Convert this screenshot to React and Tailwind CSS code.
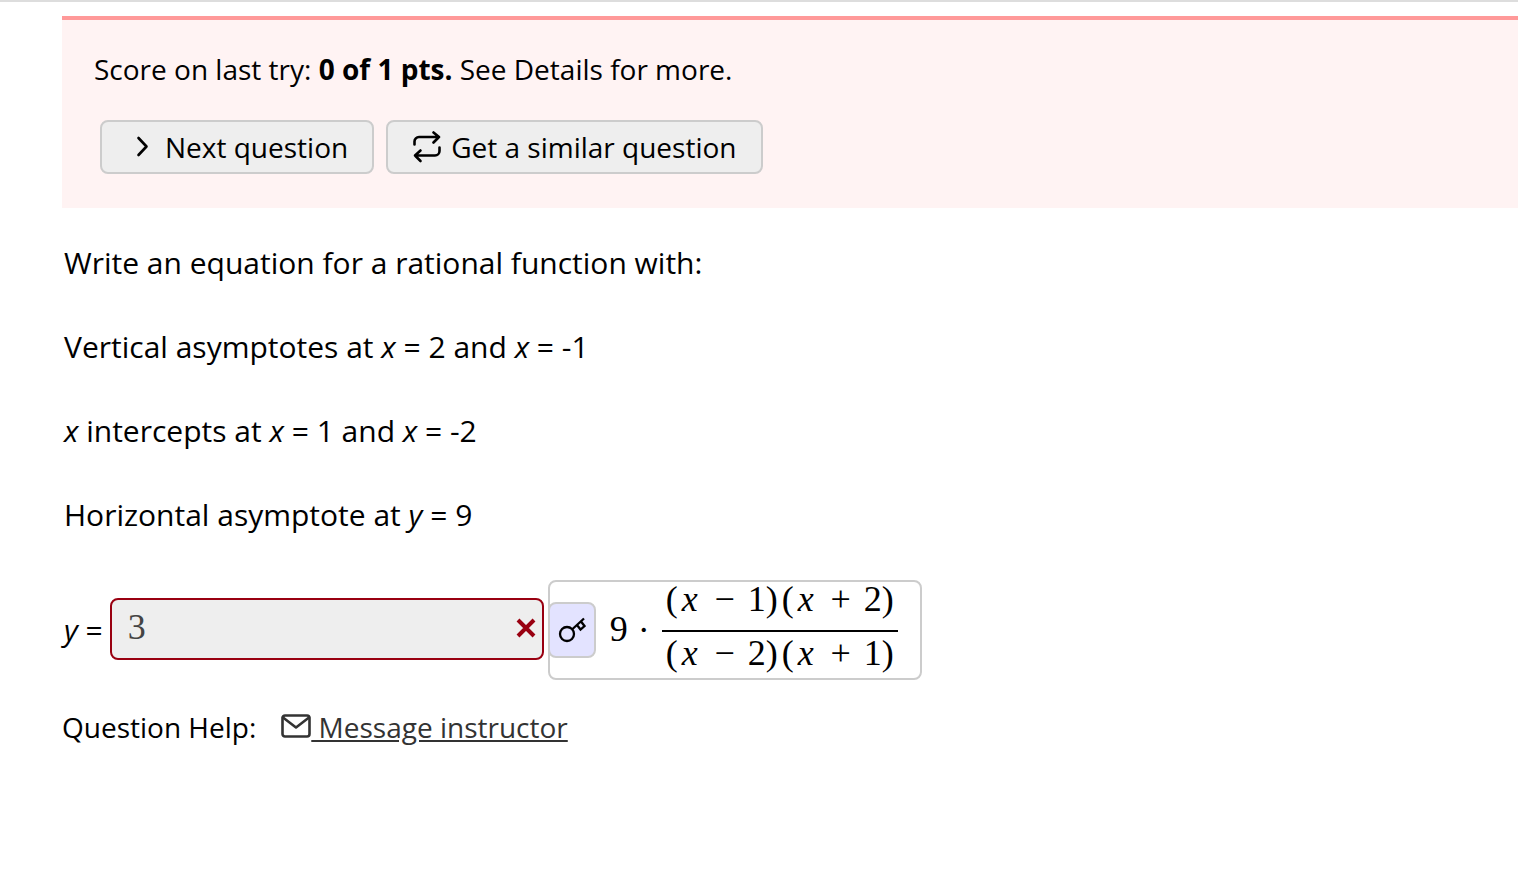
import { useState } from 'react'

const conditions = [
  <>Write an equation for a rational function with:</>,
  <>Vertical asymptotes at <i>x</i> = 2 and <i>x</i> = -1</>,
  <><i>x</i> intercepts at <i>x</i> = 1 and <i>x</i> = -2</>,
  <>Horizontal asymptote at <i>y</i> = 9</>,
]

function ChevronIcon() {
  return (
    <svg className="w-7 h-8" viewBox="0 0 28 32" fill="none" stroke="currentColor" strokeWidth="2.6" strokeLinecap="round" strokeLinejoin="round" aria-hidden="true">
      <path d="M11.500 7l8 8.500-8 8.500" />
    </svg>
  )
}

function RepeatIcon() {
  return (
    <svg className="w-7 h-8" viewBox="0 0 28 32" fill="none" stroke="currentColor" strokeWidth="2.6" strokeLinecap="round" strokeLinejoin="round" aria-hidden="true">
      <path d="M1.500 13.500v-3a4.500 4.500 0 0 1 4.500-4.500h20M20.500 1.500l5.500 4.500-5.500 5.500" />
      <path d="M26.500 16.500v3.500a4.500 4.500 0 0 1-4.500 4.500H2M7.500 19.500l-5.500 5 5.500 5.500" />
    </svg>
  )
}

function KeyIcon() {
  return (
    <svg className="w-7 h-7" viewBox="0 0 28 28" fill="none" stroke="currentColor" strokeWidth="2.3" aria-hidden="true">
      <circle cx="9" cy="18" r="7" />
      <path d="M14 13.500L26 2.500M19 9l3.500 4.500 4-3.500-3.500-4.500" />
    </svg>
  )
}

function CrossIcon() {
  return (
    <svg className="w-5 h-5" viewBox="0 0 20 20" fill="none" stroke="currentColor" strokeWidth="4" aria-hidden="true">
      <path d="M2 2l16 16M18 2L2 18" />
    </svg>
  )
}

function MailIcon() {
  return (
    <svg className="w-[30px] h-[26px]" viewBox="0 0 30 26" fill="none" stroke="currentColor" strokeWidth="2.6" strokeLinecap="round" strokeLinejoin="round" aria-hidden="true">
      <rect x="1.500" y="1.500" width="27" height="21" rx="2.500" />
      <path d="M2 3.500l13 10L28 3.500" />
    </svg>
  )
}

function Factor({ sign, value }) {
  return (
    <span className="flex px-0.5">
      <span>(</span>
      <i className="mx-1">x</i>
      <span className="w-[46px] text-center">{sign}</span>
      <span>{value})</span>
    </span>
  )
}

export default function App() {
  const [answer, setAnswer] = useState('3')

  return (
    <div className="border-t-2 border-[#dddddd] bg-white pl-[62px] pt-3.5 text-black text-[30px] leading-[42px] font-['Open_Sans','Noto_Sans',sans-serif]">
      <section className="border-t-4 border-[#ff9999] bg-[#fff3f3] px-8 pt-7 pb-[34px] text-[28px]">
        <p>
          Score on last try: <b>0 of 1 pts.</b> See Details for more.
        </p>
        <div className="flex gap-3 mt-[30px] pl-1.5 leading-[50px]">
          <button type="button" className="flex items-center gap-2.5 rounded-lg border-2 border-[#cccccc] bg-[#eeeeee] pl-[25px] pr-6 cursor-pointer">
            <ChevronIcon />
            Next question
          </button>
          <button type="button" className="flex items-center gap-2.5 rounded-lg border-2 border-[#cccccc] bg-[#eeeeee] pl-[25px] pr-6 cursor-pointer">
            <RepeatIcon />
            Get a similar question
          </button>
        </div>
      </section>

      <div className="flex flex-col gap-[42px] pt-[34px] pl-0.5">
        {conditions.map((text, i) => (
          <p key={i}>{text}</p>
        ))}
      </div>

      <div className="flex items-center mt-11 pl-0.5">
        <label htmlFor="answer" className="mr-[7px]"><i>y</i> =</label>
        <div className="relative mb-0.5">
          <input
            id="answer"
            type="text"
            value={answer}
            onChange={(e) => setAnswer(e.target.value)}
            className="block w-[434px] h-[62px] rounded-lg border-2 border-[#990011] bg-[#eeeeee] pl-4 pr-10 pb-1 text-[36px] text-[#444444] font-['Liberation_Serif',serif]"
          />
          <span className="absolute right-2 top-5 text-[#990011]">
            <CrossIcon />
          </span>
        </div>
        <div className="flex items-center h-[100px] ml-1 rounded-lg border-2 border-[#cccccc] pr-[22px] text-[36px] font-['Liberation_Serif',serif]">
          <button type="button" aria-label="Show answer" className="flex items-center justify-center w-12 h-14 -ml-0.5 rounded-lg border-2 border-[#cccccc] bg-[#e3e3ff] cursor-pointer">
            <KeyIcon />
          </button>
          <span className="ml-3.5 pb-0.5">9</span>
          <span className="w-8 mr-0.5 text-center">·</span>
          <span className="flex flex-col pb-2">
            <span className="flex border-b-2 border-black px-0.5 pb-2.5">
              <Factor sign="−" value="1" />
              <Factor sign="+" value="2" />
            </span>
            <span className="flex px-0.5">
              <Factor sign="−" value="2" />
              <Factor sign="+" value="1" />
            </span>
          </span>
        </div>
      </div>

      <div className="flex items-center mt-[26px] text-[28px]">
        <span>Question Help:</span>
        <a href="#message" className="flex items-center ml-[25px] text-[#333333]">
          <MailIcon />
          <span className="whitespace-pre underline"> Message instructor</span>
        </a>
      </div>
    </div>
  )
}
